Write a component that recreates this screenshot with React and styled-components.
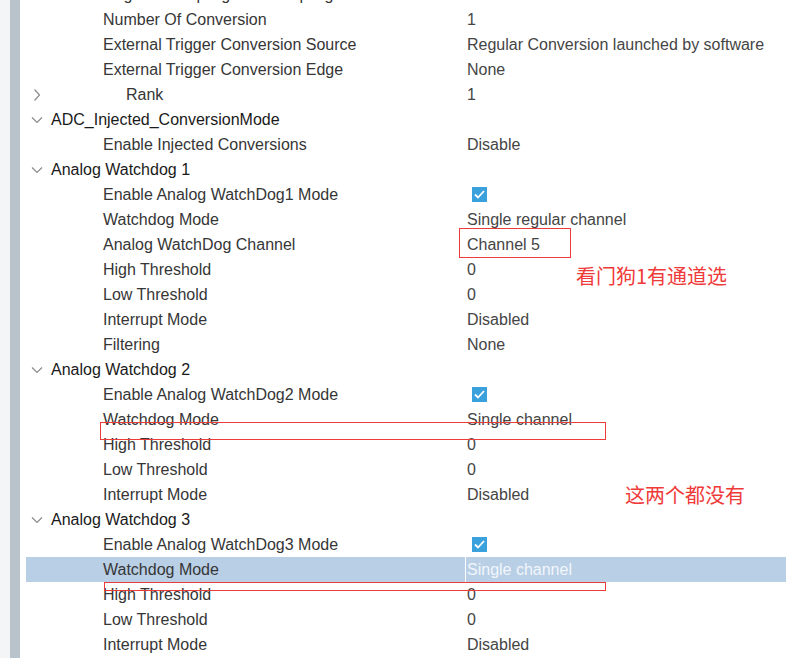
import React from 'react'
import styled, { createGlobalStyle } from 'styled-components'

const GlobalStyle = createGlobalStyle`
  html, body {
    margin: 0;
    padding: 0;
    background: #fff;
    overflow: hidden;
  }
  body {
    font-family: "Liberation Sans", Arial, sans-serif;
  }
`

const Page = styled.div`
  position: relative;
  display: flex;
  width: 786px;
  height: 658px;
  overflow: hidden;
  background: #fff;
`

const Gutter = styled.div`
  width: 10px;
  flex-shrink: 0;
  background: #f4f5f6;
`

const SideBar = styled.div`
  width: 10px;
  flex-shrink: 0;
  background: #b9c3cb;
`

const Tree = styled.div`
  display: flex;
  flex-direction: column;
  flex: 1;
  margin-left: 6px;
  margin-top: -18px;
`

const Row = styled.div`
  display: grid;
  grid-template-columns: 439px 1fr;
  height: 25px;
  align-items: stretch;
  background: ${(p) => (p.selected ? '#b9cfe6' : 'transparent')};
  font-size: 16px;
`

const LabelCell = styled.div`
  display: flex;
  align-items: center;
  padding-left: ${(p) => p.indent}px;
  color: ${(p) => (p.header ? '#1a1a1a' : '#363636')};
  white-space: nowrap;
`

const ValueCell = styled.div`
  display: flex;
  align-items: center;
  border-left: 1px solid ${(p) => (p.selected ? '#ffffff' : 'transparent')};
  padding-left: 1px;
  color: ${(p) => (p.selected ? '#f2f6fb' : '#454545')};
  white-space: nowrap;
`

const ChevronBox = styled.span`
  display: inline-flex;
  width: 18px;
  justify-content: center;
  margin-left: 2px;
  margin-right: ${(p) => p.gap}px;
`

const Check = styled.span`
  display: inline-flex;
  align-items: center;
  justify-content: center;
  width: 15px;
  height: 15px;
  margin-left: 5px;
  background: #3ba1dd;
`

const Mark = styled.div`
  position: absolute;
  left: ${(p) => p.x}px;
  top: ${(p) => p.y}px;
  width: ${(p) => p.w}px;
  height: ${(p) => p.h}px;
  border: 1px solid #ef3a3a;
  box-sizing: border-box;
  pointer-events: none;
`

const Note = styled.div`
  position: absolute;
  left: ${(p) => p.x}px;
  top: ${(p) => p.y}px;
  color: #ef3a3a;
  font-size: 20px;
  line-height: 20px;
  font-family: "Noto Sans CJK SC", "Liberation Sans", sans-serif;
  white-space: nowrap;
`

const Chevron = ({ open }) => (
  <svg width="12" height="12" viewBox="0 0 12 12">
    {open ? (
      <path d="M1 3.5 L6 8.5 L11 3.5" fill="none" stroke="#8a8a8a" strokeWidth="1.2" />
    ) : (
      <path d="M3.5 0.5 L8.5 6 L3.5 11.5" fill="none" stroke="#8a8a8a" strokeWidth="1.2" />
    )}
  </svg>
)

const CheckMark = () => (
  <svg width="11" height="9" viewBox="0 0 11 9">
    <path d="M1 4.5 L4 7.5 L10 1" fill="none" stroke="#fff" strokeWidth="1.8" />
  </svg>
)

const rows = [
  { label: 'Regular Sampling Oversampling', value: '' },
  { label: 'Number Of Conversion', value: '1' },
  { label: 'External Trigger Conversion Source', value: 'Regular Conversion launched by software' },
  { label: 'External Trigger Conversion Edge', value: 'None' },
  { label: 'Rank', value: '1', chevron: 'closed' },
  { label: 'ADC_Injected_ConversionMode', header: true },
  { label: 'Enable Injected Conversions', value: 'Disable' },
  { label: 'Analog Watchdog 1', header: true },
  { label: 'Enable Analog WatchDog1 Mode', check: true },
  { label: 'Watchdog Mode', value: 'Single regular channel' },
  { label: 'Analog WatchDog Channel', value: 'Channel 5' },
  { label: 'High Threshold', value: '0' },
  { label: 'Low Threshold', value: '0' },
  { label: 'Interrupt Mode', value: 'Disabled' },
  { label: 'Filtering', value: 'None' },
  { label: 'Analog Watchdog 2', header: true },
  { label: 'Enable Analog WatchDog2 Mode', check: true },
  { label: 'Watchdog Mode', value: 'Single channel' },
  { label: 'High Threshold', value: '0' },
  { label: 'Low Threshold', value: '0' },
  { label: 'Interrupt Mode', value: 'Disabled' },
  { label: 'Analog Watchdog 3', header: true },
  { label: 'Enable Analog WatchDog3 Mode', check: true },
  { label: 'Watchdog Mode', value: 'Single channel', selected: true },
  { label: 'High Threshold', value: '0' },
  { label: 'Low Threshold', value: '0' },
  { label: 'Interrupt Mode', value: 'Disabled' },
]

const TreeRow = ({ row }) => {
  let label
  if (row.header) {
    label = (
      <LabelCell header indent={0}>
        <ChevronBox gap={5}><Chevron open /></ChevronBox>
        {row.label}
      </LabelCell>
    )
  } else if (row.chevron) {
    label = (
      <LabelCell indent={0}>
        <ChevronBox gap={80}><Chevron /></ChevronBox>
        {row.label}
      </LabelCell>
    )
  } else {
    label = <LabelCell indent={77}>{row.label}</LabelCell>
  }

  return (
    <Row selected={row.selected}>
      {label}
      <ValueCell selected={row.selected}>
        {row.check ? (
          <Check><CheckMark /></Check>
        ) : (
          row.value
        )}
      </ValueCell>
    </Row>
  )
}

const App = () => {
  return (
    <Page>
      <GlobalStyle />
      <Gutter />
      <SideBar />
      <Tree>
        {rows.map((row, i) => (
          <TreeRow key={i} row={row} />
        ))}
      </Tree>

      <Mark x={459} y={228} w={112} h={30} />
      <Note x={576} y={266}>看门狗1有通道选</Note>
      <Mark x={100} y={422} w={506} h={18} />
      <Note x={625} y={485}>这两个都没有</Note>
      <Mark x={104} y={582} w={502} h={9} />
    </Page>
  )
}

export default App
